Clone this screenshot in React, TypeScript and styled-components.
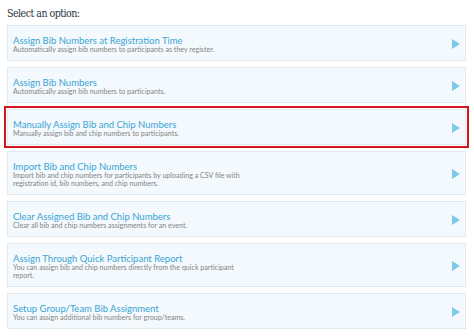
import React from 'react'
import styled, { createGlobalStyle } from 'styled-components'

type Option = {
  title: string
  text: string
  selected?: boolean
}

const options: Option[] = [
  {
    title: 'Assign Bib Numbers at Registration Time',
    text: 'Automatically assign bib numbers to participants as they register.',
  },
  {
    title: 'Assign Bib Numbers',
    text: 'Automatically assign bib numbers to participants.',
  },
  {
    title: 'Manually Assign Bib and Chip Numbers',
    text: 'Manually assign bib and chip numbers to participants.',
    selected: true,
  },
  {
    title: 'Import Bib and Chip Numbers',
    text: 'Import bib and chip numbers for participants by uploading a CSV file with registration id, bib numbers, and chip numbers.',
  },
  {
    title: 'Clear Assigned Bib and Chip Numbers',
    text: 'Clear all bib and chip numbers assignments for an event.',
  },
  {
    title: 'Assign Through Quick Participant Report',
    text: 'You can assign bib and chip numbers directly from the quick participant report.',
  },
  {
    title: 'Setup Group/Team Bib Assignment',
    text: 'You can assign additional bib numbers for group/teams.',
  },
]

const App: React.FC = () => {
  return (
    <Page>
      <GlobalStyle />
      <Heading>Select an option:</Heading>
      <List>
        {options.map(option => (
          <Card key={option.title} selected={option.selected ? 1 : 0}>
            <CardBody>
              <CardTitle>{option.title}</CardTitle>
              <CardText>{option.text}</CardText>
            </CardBody>
            <Arrow />
          </Card>
        ))}
      </List>
    </Page>
  )
}

const GlobalStyle = createGlobalStyle`
  body {
    margin: 0;
    background: #ffffff;
  }
`

const Page = styled.div`
  padding: 7px 8px 0 7px;
`

const Heading = styled.h2`
  margin: 0 0 5px;
  font-family: 'DejaVu Serif Condensed', 'DejaVu Serif', serif;
  font-stretch: condensed;
  font-weight: normal;
  font-size: 10.5px;
  letter-spacing: -0.5px;
  line-height: 13px;
  color: #27333f;
`

const List = styled.div`
  display: flex;
  flex-direction: column;
  gap: 6px;
`

const Card = styled.div<{ selected: number }>`
  display: flex;
  align-items: center;
  padding: 9px 5px 6px 5px;
  background: #f3f9fd;
  border: 1px solid #deebf3;
  ${props => {
    if (props.selected) {
      return `outline: 2px solid #d3161d; outline-offset: 1px;`
    }
  }}
`

const CardBody = styled.div`
  flex: 1;
`

const CardTitle = styled.div`
  font-family: Lato, sans-serif;
  font-size: 9.5px;
  line-height: 11px;
  color: #39a4d4;
`

const CardText = styled.div`
  max-width: 235px;
  font-family: Lato, sans-serif;
  font-size: 7.1px;
  line-height: 8px;
  color: #858585;
`

const Arrow = styled.span`
  width: 0;
  height: 0;
  margin-top: -2px;
  border-top: 5px solid transparent;
  border-bottom: 5px solid transparent;
  border-left: 8px solid #7ec8ea;
`

export default App
